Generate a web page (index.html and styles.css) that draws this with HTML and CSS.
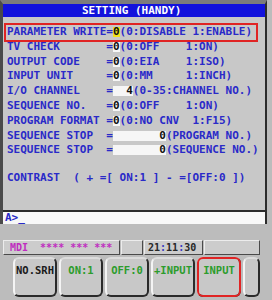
FILE: index.html
```html
<!DOCTYPE html>
<html>
<head>
    <title>Setting (Handy)</title>
    <link rel="stylesheet" href="styles.css">
</head>
<body>
    <div class="screen">
        <div class="title">SETTING (HANDY)</div>

        <div class="params">
            <div class="row sel">PARAMETER WRITE=<span class="val cur">0</span>(0:DISABLE 1:ENABLE)</div>
            <div class="row">TV CHECK       =<span class="val">0</span>(0:OFF    1:ON)</div>
            <div class="row">OUTPUT CODE    =<span class="val">0</span>(0:EIA    1:ISO)</div>
            <div class="row">INPUT UNIT     =<span class="val">0</span>(0:MM     1:INCH)</div>
            <div class="row">I/O CHANNEL    =<span class="val w3">4</span>(0-35:CHANNEL NO.)</div>
            <div class="row">SEQUENCE NO.   =<span class="val">0</span>(0:OFF    1:ON)</div>
            <div class="row">PROGRAM FORMAT =<span class="val">0</span>(0:NO CNV  1:F15)</div>
            <div class="row">SEQUENCE STOP  =<span class="val w8">0</span>(PROGRAM NO.)</div>
            <div class="row">SEQUENCE STOP  =<span class="val w8">0</span>(SEQUENCE NO.)</div>
            <div class="row contrast">CONTRAST  ( + =[ ON:1 ] - =[OFF:0 ])</div>
        </div>

        <div class="keyin">A&gt;_</div>
    </div>

    <div class="status">
        <div class="cell mode">MDI  **** *** ***</div>
        <div class="cell gap"></div>
        <div class="cell clock">21<span class="colon">:</span>11<span class="colon">:</span>30</div>
        <div class="cell rest"></div>
    </div>

    <div class="keys">
        <div class="key black">NO.SRH</div>
        <div class="key">ON:1</div>
        <div class="key">OFF:0</div>
        <div class="key">+INPUT</div>
        <div class="key sel">INPUT</div>
        <div class="key end"></div>
    </div>
</body>
</html>
```

FILE: styles.css
```css
body {
    margin: 0;
    width: 272px;
    height: 300px;
    background-color: #bcbcbc;
    font-family: "DejaVu Sans Mono", "Liberation Mono", monospace;
    font-weight: bold;
    overflow: hidden;
}

/* crt area */
.screen {
    width: 267px;
    box-sizing: border-box;
    border-top: 4px solid #7c7c7c;
    border-left: 3px solid #4a4a4a;
    border-right: 2px solid #2c2c2c;
    background-color: #c8c8c8;
}
.title {
    height: 13px;
    line-height: 13px;
    background-color: #1212dc;
    color: white;
    font-size: 11px;
    padding-left: 79px;
    white-space: pre;
}
.params {
    height: 195px;
    box-sizing: border-box;
    padding-top: 8px;
    border-bottom: 2px solid #2c2c2c;
}
.row {
    margin-left: 3px;
    width: 249px;
    padding-left: 1px;
    height: 14.8px;
    line-height: 14.8px;
    font-size: 11px;
    color: #2a2ac8;
    white-space: pre;
}
.row.sel {
    outline: 2px solid #e02424;
}
.row.contrast {
    margin-top: 13px;
}
.val {
    display: inline-block;
    width: 1ch;
    height: 10px;
    line-height: 10px;
    vertical-align: middle;
    text-align: right;
    background-color: #f6f6f6;
    color: #101010;
}
.val.cur {
    background-color: #f2e21c;
}
.val.w3 {
    width: 3ch;
}
.val.w8 {
    width: 8ch;
}
.keyin {
    height: 12px;
    line-height: 12px;
    background-color: #f8f8f8;
    color: #2a2ac8;
    font-size: 11px;
    padding-left: 2px;
}

/* status line */
.status {
    display: flex;
    gap: 1px;
    margin: 16px 0 0 3px;
    height: 15px;
}
.cell {
    box-sizing: border-box;
    height: 15px;
    line-height: 13px;
    font-size: 10px;
    white-space: pre;
    background-color: #cccccc;
    border: 1px solid;
    border-color: #ececec #4a4a4a #4a4a4a #ececec;
}
.mode {
    width: 117px;
    padding-left: 6px;
    color: #c02cc0;
}
.gap {
    width: 22px;
}
.clock {
    width: 59px;
    padding-left: 3px;
    color: #282828;
}
.colon {
    color: #3c3cc0;
}
.rest {
    width: 56px;
}

/* soft keys */
.keys {
    display: flex;
    gap: 2px;
    margin: 2px 0 0 13px;
}
.key {
    width: 44px;
    height: 40px;
    box-sizing: border-box;
    padding-top: 5px;
    border: 2px solid;
    border-color: #dcdcdc #2a2a2a #2a2a2a #f4f4f4;
    border-radius: 6px;
    background-color: #c8c8c8;
    color: #2c9c2c;
    font-size: 10.5px;
    text-align: center;
    white-space: pre;
}
.key.black {
    color: #1a1a1a;
}
.key.sel {
    outline: 2px solid #e02424;
    outline-offset: -2px;
}
.key.end {
    width: 17px;
}
```
